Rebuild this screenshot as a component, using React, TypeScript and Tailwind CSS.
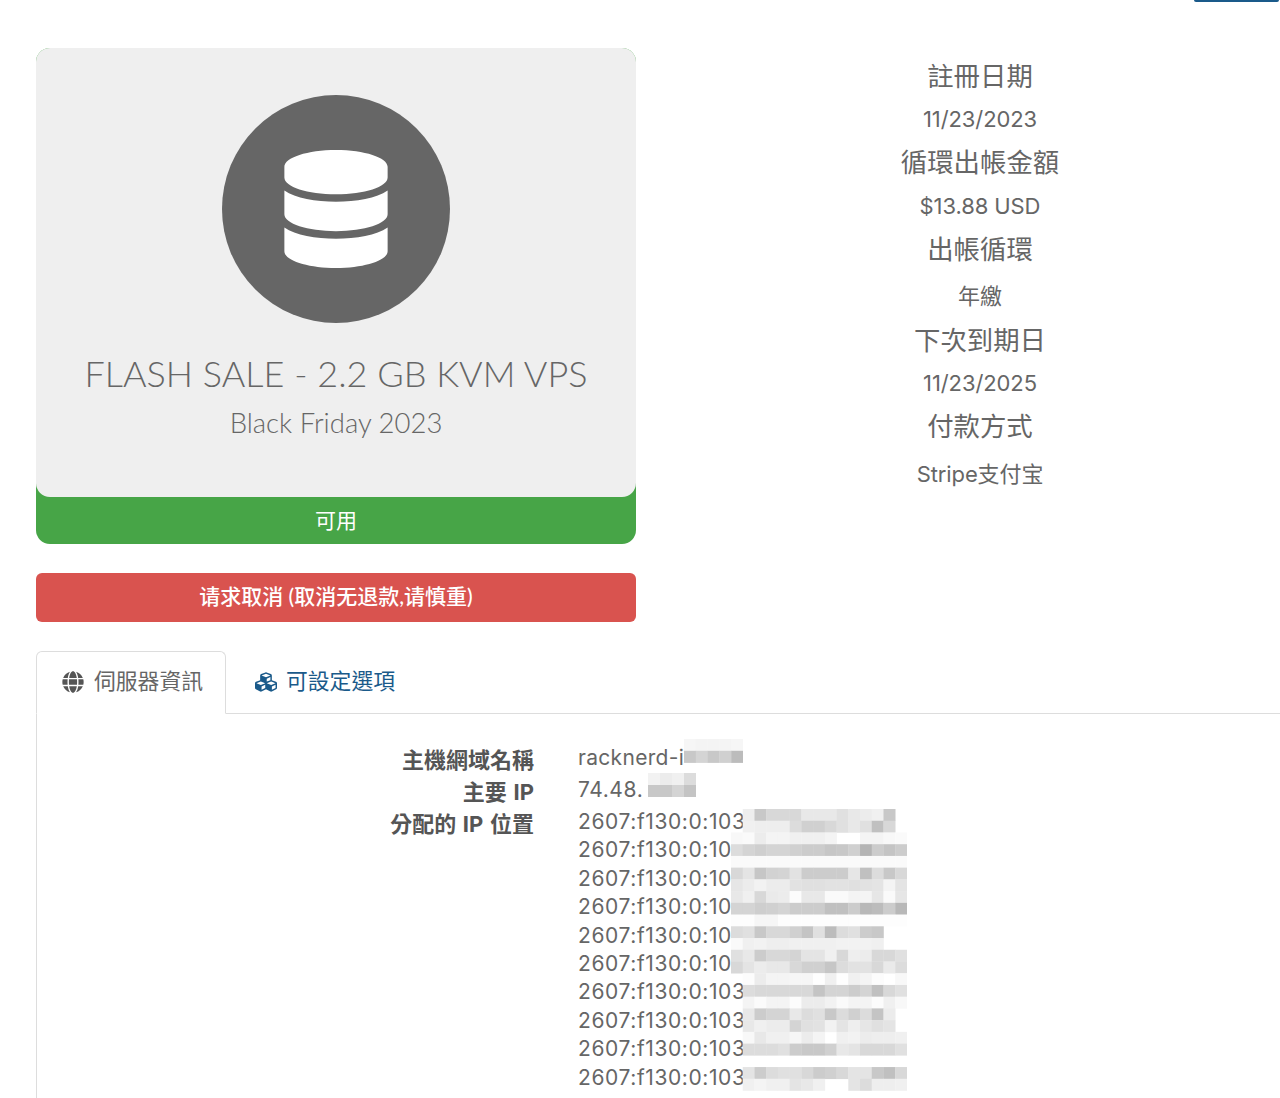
import { FaDatabase, FaGlobe, FaCubes } from "react-icons/fa";

const ui = "font-['Inter','Noto_Sans_CJK_TC','Noto_Sans_CJK_SC',sans-serif]";

const summary: { label: string; value: string; h: string; lead: string }[] = [
  { label: "註冊日期", value: "11/23/2023", h: "h-[43px]", lead: "leading-[43px]" },
  { label: "循環出帳金額", value: "$13.88 USD", h: "h-[44px]", lead: "leading-[44px]" },
  { label: "出帳循環", value: "年繳", h: "h-[48px]", lead: "leading-[51px]" },
  { label: "下次到期日", value: "11/23/2025", h: "h-[43px]", lead: "leading-[43px]" },
  { label: "付款方式", value: "Stripe支付宝", h: "h-[48px]", lead: "leading-[53px]" },
];

const mosaic = [
  "ff ee c8 d8 d8 d8 e8 e8 e8 e0 e8 ec f0 c8 ff",
  "ff f0 ee ee ee dc d0 d0 d8 e0 e8 e0 c0 d8 ff",
  "f8 fa ec f4 f4 f0 f0 f0 f4 ff ff f4 f4 f8 fa",
  "dc d4 cf d4 d4 d0 cc cc c6 c8 d0 b4 cc c4 cc",
  "fa fa fa fa fa fa fa fa fa fa fa fa fa fa fa",
  "d8 e4 c6 d2 d4 e2 cc cc cc cc e6 c0 dc c8 d8",
  "e6 ec f2 ec ec e2 e0 e0 e2 e2 e0 e2 e4 f4 e4",
  "e8 f0 d8 ea ec fc e8 e8 fa fa f4 f4 e6 fa e6",
  "d4 d4 ce d0 d4 cc cc cc c0 c0 cc b8 bc cc b8",
  "fd fd f6 f6 fd fd fd fd fd fd fd fd fd fd fd",
  "dc e0 c8 d8 d8 d0 c4 e0 bc dc e0 cc c8 ff ff",
  "fa f0 f2 ee ee f0 f0 f0 f0 f2 f2 f2 f0 ff ff",
  "e0 e8 cc d8 d8 d4 e4 e4 f0 d8 ee ec d8 d8 e0",
  "d8 e4 ec e8 e8 d8 d0 d0 c6 dc e2 e2 d8 ea dc",
  "ff fc ec f4 f4 f6 f6 fe f0 fe f0 f4 fc ff f8",
  "ff dc d8 d8 d8 d8 d8 c4 d4 d4 cc d4 c0 d8 e0",
  "ff f4 fb f4 f4 fc ec ec f2 fa f4 f4 fc f0 f8",
  "ff e8 cc d4 d4 e8 dc e0 c8 dc d0 dc c4 ec ff",
  "ff e8 f0 ec ec d4 e0 e2 f2 e4 ee e6 e0 e4 ff",
  "ff f8 e8 f0 f0 f6 ec f4 ff f0 f2 ec ee ee f0",
  "ff dc dc dc e0 cc c8 c8 d0 e8 e4 d8 d8 d8 e0",
  "ff ff ff ff ff ff ff ff ff ff ff ff ff ff ff",
  "ff e4 cc dc e0 e0 d8 cc d0 d8 e4 e4 c8 c0 d8",
  "ff f0 f4 f0 f0 e4 e8 f0 ff ff e4 dc ee ee f0",
];

function Mosaic({ rows, cell, className }: { rows: string[]; cell: number; className: string }) {
  const cols = rows[0].split(" ").length;
  return (
    <svg
      className={className}
      width={cols * cell}
      height={rows.length * cell}
      viewBox={`0 0 ${cols * cell} ${rows.length * cell}`}
      aria-hidden="true"
    >
      {rows.flatMap((row, y) =>
        row.split(" ").map((g, x) =>
          g === "ff" ? null : (
            <rect key={`${x}-${y}`} x={x * cell} y={y * cell} width={cell + 0.3} height={cell + 0.3} fill={`#${g}${g}${g}`} />
          ),
        ),
      )}
    </svg>
  );
}

const ips = [
  "2607:f130:0:103",
  "2607:f130:0:10",
  "2607:f130:0:10",
  "2607:f130:0:10",
  "2607:f130:0:10",
  "2607:f130:0:10",
  "2607:f130:0:103",
  "2607:f130:0:103",
  "2607:f130:0:103",
  "2607:f130:0:103",
];

export default function App() {
  return (
    <div className={`w-[1280px] h-[1098px] overflow-hidden bg-white text-[#666666] ${ui}`}>
      <div className="h-[48px] flex justify-end items-start pr-px">
        <div className="w-[85px] h-[2px] rounded-b bg-[#1a5a8a]" />
      </div>

      <div className="pl-9 grid grid-cols-[600px_600px] gap-x-[44px]">
        <div>
          <div className="rounded-[14px] bg-[#47a547]">
            <div className="h-[449px] rounded-[14px] bg-[#efefef] flex flex-col items-center pt-[47px]">
              <div className="w-[228px] h-[228px] rounded-full bg-[#666666] flex items-center justify-center">
                <FaDatabase className="text-white w-[104px] h-[118px]" />
              </div>
              <div className="mt-[24px] h-[52px] leading-[52px] text-[36px] font-light font-['Lato',sans-serif] text-[#666666]">
                FLASH SALE - 2.2 GB KVM VPS
              </div>
              <div className="mt-[3px] h-[42px] leading-[42px] text-[27.5px] font-light font-['Lato',sans-serif] text-[#666666]">
                Black Friday 2023
              </div>
            </div>
            <div className="h-[47px] flex items-center justify-center text-white text-[21px] pb-px font-['Noto_Sans_CJK_TC',sans-serif]">
              可用
            </div>
          </div>
          <button className="mt-[29px] w-full h-[49px] rounded-[6px] bg-[#d9534f] text-white text-[21px] font-medium flex items-center justify-center pb-[3px] font-['Lato','Noto_Sans_CJK_SC',sans-serif]">
            请求取消 (取消无退款,请慎重)
          </button>
        </div>

        <div className="flex flex-col items-center pt-[7px]">
          {summary.map((s) => (
            <div key={s.label} className="flex flex-col items-center">
              <div className="h-[43px] leading-[43px] text-[26.4px]">{s.label}</div>
              <div className={`${s.h} ${s.lead} text-[22px] tracking-[-0.1px]`}>{s.value}</div>
            </div>
          ))}
        </div>
      </div>

      <div className="ml-9 mt-[29px]">
        <div className="flex h-[63px] border-b border-[#dddddd]">
          <div className="w-[190px] h-[63px] rounded-t-[6px] border border-[#dddddd] border-b-white bg-white flex items-center pl-[25px] gap-[10px] pb-[2px] text-[21.8px]">
            <FaGlobe className="w-[22px] h-[22px] text-[#555555]" />
            <span>伺服器資訊</span>
          </div>
          <div className="h-[61px] flex items-center pl-[28px] gap-[8px] text-[21.8px] text-[#1a5a8a]">
            <FaCubes className="w-[24px] h-[22px]" />
            <span>可設定選項</span>
          </div>
        </div>

        <div className="border-l border-[#dddddd] h-[400px] pt-[27px] grid grid-cols-[497px_1fr] gap-x-[44px]">
          <div className="flex flex-col items-end pt-[3px] font-bold text-[22px] text-[#555555] [word-spacing:1.5px]">
            <div className="h-[32px] leading-[32px]">主機網域名稱</div>
            <div className="h-[32px] leading-[32px]">主要 IP</div>
            <div className="h-[32px] leading-[32px]">分配的 IP 位置</div>
          </div>
          <div className="relative text-[21px] mt-px">
            <div className="h-[32px] leading-[32px] tracking-[0.3px]">racknerd-i</div>
            <div className="h-[32px] leading-[32px] tracking-[0.6px]">74.48.</div>
            <div className="mt-[2px]">
              {ips.map((ip, i) => (
                <div key={i} className="h-[28.4px] leading-[28.4px] whitespace-nowrap tracking-[0.6px]">
                  {ip}
                </div>
              ))}
            </div>
            <Mosaic
              rows={["f6 f4 f4 f4 f6", "c8 d4 c8 d0 bc"]}
              cell={11.8}
              className="absolute left-[106px] top-[-3px]"
            />
            <Mosaic
              rows={["f2 ec f0 dc", "c8 c8 d4 c4"]}
              cell={12}
              className="absolute left-[70px] top-[31px]"
            />
            <Mosaic rows={mosaic} cell={11.73} className="absolute left-[153px] top-[67px] blur-[0.4px]" />
          </div>
        </div>
      </div>
    </div>
  );
}
